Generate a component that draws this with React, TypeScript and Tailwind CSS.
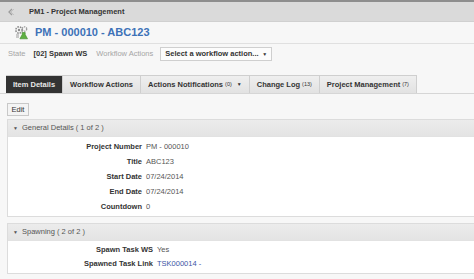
import { useState } from "react";

const general = [
  { label: "Project Number", value: "PM - 000010" },
  { label: "Title", value: "ABC123" },
  { label: "Start Date", value: "07/24/2014" },
  { label: "End Date", value: "07/24/2014" },
  { label: "Countdown", value: "0" },
];

const spawning = [
  { label: "Spawn Task WS", value: "Yes" },
  { label: "Spawned Task Link", value: "TSK000014 -", link: true },
];

const tabs = [
  { name: "Item Details" },
  { name: "Workflow Actions" },
  { name: "Actions Notifications", count: "(0)", menu: true },
  { name: "Change Log", count: "(13)" },
  { name: "Project Management", count: "(7)" },
];

function ItemIcon() {
  return (
    <svg width="15" height="15" viewBox="0 0 15 15" aria-hidden>
      <circle cx="5" cy="5" r="3.2" fill="none" stroke="#8a8a8a" strokeWidth="1.6" strokeDasharray="1.6 1" />
      <circle cx="5" cy="5" r="1.2" fill="#8a8a8a" />
      <circle cx="10.5" cy="4" r="2.2" fill="none" stroke="#9a9a9a" strokeWidth="1.3" strokeDasharray="1.3 0.9" />
      <path d="M8.2 7.5h3v2l2.3 4.3h-7.6l2.3-4.3z" fill="#5fb043" stroke="#3d8a2a" strokeWidth="0.6" />
      <rect x="2" y="9" width="3" height="4" fill="#c9c9c9" />
    </svg>
  );
}

function Panel({
  title,
  rows,
  labelWidth,
  rowHeight,
}: {
  title: string;
  rows: { label: string; value: string; link?: boolean }[];
  labelWidth: string;
  rowHeight: string;
}) {
  return (
    <div className="w-[472px] border border-[#dcdcdc] bg-white">
      <div className="flex h-[17px] items-center gap-[4px] border-b border-[#e2e2e2] bg-gradient-to-b from-[#ececec] to-[#e4e4e4] pl-[5px] text-[#555]">
        <span className="text-[5px]">▼</span>
        <span>{title}</span>
      </div>
      <div className="pt-[2px] pb-[2px]">
        {rows.map((r) => (
          <div key={r.label} className={`flex items-center ${rowHeight}`}>
            <span className={`${labelWidth} shrink-0 text-right font-bold text-[#333]`}>{r.label}</span>
            <span className={`ml-[4px] ${r.link ? "text-[#3a55a5]" : "text-[#555]"}`}>{r.value}</span>
          </div>
        ))}
      </div>
    </div>
  );
}

export default function App() {
  const [active] = useState("Item Details");

  return (
    <div className="h-[279px] w-[474px] overflow-hidden bg-[#f7f7f7] font-['Liberation_Sans',Arial,sans-serif] text-[7.5px] leading-none text-[#333]">
      <div className="h-[2px] bg-[#8e8e8e]" />
      <div className="flex h-[20px] items-center border-b border-[#d0d0d0] bg-[#dadada]">
        <svg width="8" height="8" viewBox="0 0 8 8" className="ml-[7px]" aria-hidden>
          <path d="M5 1L2 4l3 3" fill="none" stroke="#9c9c9c" strokeWidth="1.3" />
          <path d="M7 1L4 4l3 3" fill="none" stroke="#c2c2c2" strokeWidth="1" />
        </svg>
        <span className="ml-[14px] font-bold text-[#333]">PM1 - Project Management</span>
      </div>

      <div className="flex h-[22px] items-center border-b border-[#e0e0e0] pl-[14px]">
        <ItemIcon />
        <span className="ml-[6px] text-[11px] font-bold text-[#3d72b8]">PM - 000010 - ABC123</span>
      </div>

      <div className="flex h-[20px] items-center pl-[8px]">
        <span className="text-[#a5a5a5]">State</span>
        <span className="ml-[8px] font-bold text-[#333]">[02] Spawn WS</span>
        <span className="ml-[9px] text-[#a5a5a5]">Workflow Actions</span>
        <div className="ml-[7px] flex h-[14px] w-[112px] items-center justify-between border border-[#cfcfcf] bg-[#fcfcfc] px-[4px]">
          <span className="font-bold text-[#333]">Select a workflow action...</span>
          <span className="text-[5px] text-[#333]">▼</span>
        </div>
      </div>

      <div className="mt-[11px] flex h-[19px] items-stretch border-b border-[#d6d6d6] pl-[6px]">
        {tabs.map((t) => {
          const on = t.name === active;
          return (
            <div
              key={t.name}
              className={`flex items-center gap-[2px] border-r border-t border-[#cfcfcf] px-[7px] font-bold ${
                on ? "bg-[#333333] text-[#e8e8e8]" : "bg-gradient-to-b from-[#efefef] to-[#e2e2e2] text-[#333]"
              }`}
            >
              <span>{t.name}</span>
              {t.count && <span className="text-[5.5px] font-normal">{t.count}</span>}
              {t.menu && <span className="ml-[3px] text-[5px]">▼</span>}
            </div>
          );
        })}
      </div>

      <div className="pl-[7px] pt-[9px]">
        <button className="h-[13px] w-[22px] border border-[#c8c8c8] bg-[#f4f4f4] text-[#333]">Edit</button>
      </div>

      <div className="mt-[3px] pl-[7px]">
        <Panel title="General Details ( 1 of 2 )" rows={general} labelWidth="w-[134px]" rowHeight="h-[15px]" />
      </div>
      <div className="mt-[6px] pl-[7px]">
        <Panel title="Spawning ( 2 of 2 )" rows={spawning} labelWidth="w-[145px]" rowHeight="h-[14px]" />
      </div>
    </div>
  );
}
